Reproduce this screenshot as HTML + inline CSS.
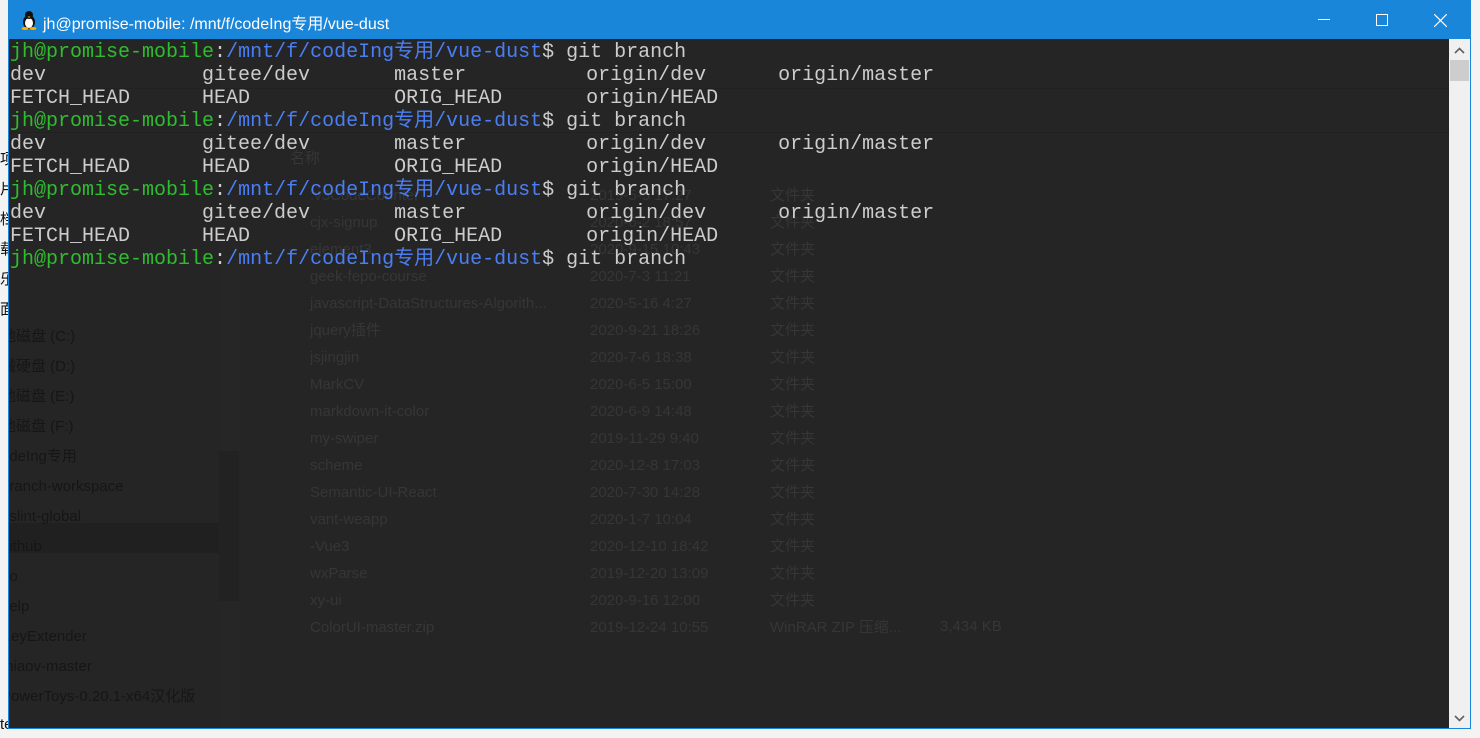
<!DOCTYPE html>
<html><head><meta charset="utf-8">
<style>
*{margin:0;padding:0;box-sizing:border-box}
body{width:1480px;height:738px;overflow:hidden;background:#f3f3f3;position:relative;font-family:"Liberation Sans","Noto Sans CJK SC",sans-serif}
.abs{position:absolute;white-space:nowrap}
.win{position:absolute;left:8px;top:0;width:1463px;height:729px;border:1px solid #1a86d9;background:#252525;overflow:hidden}
.title{position:absolute;left:0;top:0;width:100%;height:38px;background:#1a86d9;color:#fff;font-size:15px}
.term{position:absolute;left:1px;top:40px;font-family:"Liberation Mono","Noto Sans CJK SC",monospace;font-size:20px;line-height:23px;color:#cccccc;white-space:pre}
.g{color:#2ebd2e}.b{color:#4a7ef5}
.ghost{color:#363636;font-size:15px}
.side{color:#161616;font-size:15px}
.sb{position:absolute;right:0;top:38px;width:21px;bottom:0;background:#f0f0f0}
</style></head><body>
<div class="abs" style="left:0;top:716px;font-size:15px;color:#111">test</div>
<div class="abs" style="left:0;top:145px;font-size:15px;color:#111;line-height:30px;width:8px;overflow:hidden">项<br>片<br>档<br>载<br>乐<br>面</div>
<div class="win">
 <div class="abs" style="left:0;top:522px;width:210px;height:30px;background:#202020"></div>
 <div class="abs" style="left:210px;top:38px;width:20px;height:692px;background:#262626"></div>
 <div class="abs" style="left:210px;top:450px;width:20px;height:150px;background:#222"></div>
 <div class="abs side" style="left:-8px;top:321px;line-height:30px">地磁盘 (C:)<br>械硬盘 (D:)<br>地磁盘 (E:)<br>地磁盘 (F:)<br>odeIng专用<br>branch-workspace<br>eslint-global<br>github<br>go<br>help<br>KeyExtender<br>miaov-master<br>PowerToys-0.20.1-x64汉化版</div>
 <div class="abs ghost" style="left:301px;top:181px;line-height:27px">.v3CodeCounter<br>cjx-signup<br>element3<br>geek-fepo-course<br>javascript-DataStructures-Algorith...<br>jquery插件<br>jsjingjin<br>MarkCV<br>markdown-it-color<br>my-swiper<br>scheme<br>Semantic-UI-React<br>vant-weapp<br>-Vue3<br>wxParse<br>xy-ui<br>ColorUI-master.zip</div>
 <div class="abs ghost" style="left:581px;top:181px;line-height:27px">2019-5-5 17:27<br>2020-6-2 18:57<br>2020-9-15 10:43<br>2020-7-3 11:21<br>2020-5-16 4:27<br>2020-9-21 18:26<br>2020-7-6 18:38<br>2020-6-5 15:00<br>2020-6-9 14:48<br>2019-11-29 9:40<br>2020-12-8 17:03<br>2020-7-30 14:28<br>2020-1-7 10:04<br>2020-12-10 18:42<br>2019-12-20 13:09<br>2020-9-16 12:00<br>2019-12-24 10:55</div>
 <div class="abs ghost" style="left:761px;top:181px;line-height:27px">文件夹<br>文件夹<br>文件夹<br>文件夹<br>文件夹<br>文件夹<br>文件夹<br>文件夹<br>文件夹<br>文件夹<br>文件夹<br>文件夹<br>文件夹<br>文件夹<br>文件夹<br>文件夹<br>WinRAR ZIP 压缩...</div>
 <div class="abs ghost" style="left:931px;top:617px">3,434 KB</div>
 <div class="abs ghost" style="left:281px;top:146px">名称</div>
 <div class="abs" style="left:0;top:87px;width:1440px;height:1px;background:#212121"></div>
 <div class="abs" style="left:0;top:131px;width:1440px;height:1px;background:#212121"></div>
 <div class="title">
  <svg class="abs" style="left:12px;top:9px" width="16" height="20" viewBox="0 0 16 20"><ellipse cx="8" cy="12" rx="6" ry="7" fill="#111"/><ellipse cx="8" cy="13" rx="4" ry="5" fill="#fff"/><circle cx="8" cy="5" r="4" fill="#111"/><ellipse cx="4" cy="18.5" rx="3.5" ry="1.5" fill="#f3b500"/><ellipse cx="12" cy="18.5" rx="3.5" ry="1.5" fill="#f3b500"/><path d="M6.5 6.5h3l-1.5 1.5z" fill="#f3b500"/></svg>
  <div class="abs" style="left:34px;top:9px;font-size:16px">jh@promise-mobile: /mnt/f/codeIng专用/vue-dust</div>
  <div class="abs" style="left:1309px;top:18px;width:12px;height:1px;background:#fff"></div>
  <div class="abs" style="left:1367px;top:13px;width:12px;height:12px;border:1px solid #fff"></div>
  <svg class="abs" style="left:1425px;top:13px" width="13" height="13"><path d="M0 0L13 13M13 0L0 13" stroke="#fff" stroke-width="1.2"/></svg>
 </div>
 <div class="term"><span class="g">jh@promise-mobile</span>:<span class="b">/mnt/f/codeIng专用/vue-dust</span>$ git branch
dev             gitee/dev       master          origin/dev      origin/master
FETCH_HEAD      HEAD            ORIG_HEAD       origin/HEAD
<span class="g">jh@promise-mobile</span>:<span class="b">/mnt/f/codeIng专用/vue-dust</span>$ git branch
dev             gitee/dev       master          origin/dev      origin/master
FETCH_HEAD      HEAD            ORIG_HEAD       origin/HEAD
<span class="g">jh@promise-mobile</span>:<span class="b">/mnt/f/codeIng专用/vue-dust</span>$ git branch
dev             gitee/dev       master          origin/dev      origin/master
FETCH_HEAD      HEAD            ORIG_HEAD       origin/HEAD
<span class="g">jh@promise-mobile</span>:<span class="b">/mnt/f/codeIng专用/vue-dust</span>$ git branch</div>
 <div class="sb">
  <svg class="abs" style="left:5px;top:8px" width="11" height="7"><path d="M1 6L5.5 1.5L10 6" stroke="#606060" stroke-width="1.6" fill="none"/></svg>
  <div class="abs" style="left:1px;top:21px;width:19px;height:21px;background:#cdcdcd"></div>
  <svg class="abs" style="left:5px;bottom:6px" width="11" height="7"><path d="M1 1L5.5 5.5L10 1" stroke="#606060" stroke-width="1.6" fill="none"/></svg>
 </div>
</div>
</body></html>
